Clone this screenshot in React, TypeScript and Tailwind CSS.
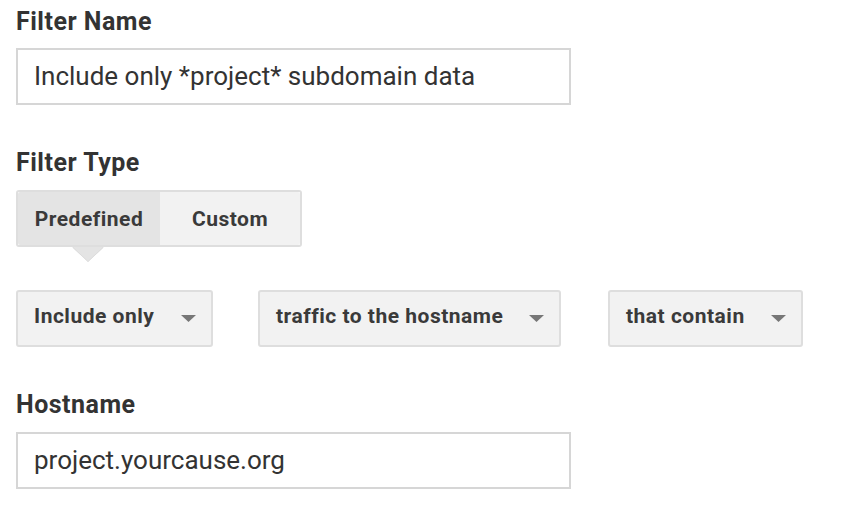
import { useState } from 'react';

const font = { fontFamily: 'Roboto, "Liberation Sans", sans-serif' };

function Label({ children, className = '' }: { children: React.ReactNode; className?: string }) {
  return (
    <div className={`h-[28px] text-[25px] leading-[28px] tracking-[0.5px] font-bold text-[#333] ${className}`}>
      {children}
    </div>
  );
}

function TextInput({ value, className = '' }: { value: string; className?: string }) {
  return (
    <div
      className={`w-[555px] h-[57px] border-2 border-[#d6d6d6] bg-white flex items-center px-[16px] text-[26px] text-[#333] ${className}`}
    >
      {value}
    </div>
  );
}

function Dropdown({ label, width }: { label: string; width: string }) {
  return (
    <button
      className={`${width} h-[57px] flex items-center justify-between pl-[16px] pr-[15px] rounded-[3px] border-2 border-[#dedede] bg-[#f2f2f2] text-[21px] tracking-[0.5px] font-bold text-[#3a3a3a]`}
    >
      <span className="-mt-[3px]">{label}</span>
      <svg width="15" height="7" viewBox="0 0 15 7" className="shrink-0">
        <path d="M0 0 H15 L7.5 7 Z" fill="#777" />
      </svg>
    </button>
  );
}

export default function App() {
  const [mode, setMode] = useState<'predefined' | 'custom'>('predefined');

  return (
    <div style={font} className="w-[846px] h-[516px] bg-white pl-[16px] pt-[8px]">
      <Label>Filter Name</Label>
      <TextInput value="Include only *project* subdomain data" className="mt-[12px]" />

      <Label className="mt-[44px]">Filter Type</Label>
      <div className="mt-[13px] relative flex w-[286px] h-[57px] rounded-[3px] border-2 border-[#dedede] text-[21px] tracking-[0.5px] font-bold text-[#3a3a3a]">
        <button
          onClick={() => setMode('predefined')}
          className={`w-[142px] h-full pt-[3px] rounded-l-[2px] ${mode === 'predefined' ? 'bg-[#e4e4e4]' : 'bg-[#f2f2f2]'}`}
        >
          Predefined
        </button>
        <button
          onClick={() => setMode('custom')}
          className={`flex-1 h-full pt-[3px] rounded-r-[2px] ${mode === 'custom' ? 'bg-[#e4e4e4]' : 'bg-[#f2f2f2]'}`}
        >
          Custom
        </button>
        {/* pointer under the active tab */}
        <svg
          width="32"
          height="16"
          viewBox="0 0 32 16"
          className={`absolute top-[55px] ${mode === 'predefined' ? 'left-[54px]' : 'left-[195px]'}`}
        >
          <path d="M0 0 L16 15 L32 0 Z" fill="#e4e4e4" />
          <path d="M1 0.5 L16 14.5 L31 0.5" fill="none" stroke="#dcdcdc" strokeWidth="1" />
        </svg>
      </div>

      <div className="mt-[43px] flex items-center">
        <Dropdown label="Include only" width="w-[197px]" />
        <div className="ml-[45px]">
          <Dropdown label="traffic to the hostname" width="w-[303px]" />
        </div>
        <div className="ml-[47px]">
          <Dropdown label="that contain" width="w-[195px]" />
        </div>
      </div>

      <Label className="mt-[44px]">Hostname</Label>
      <TextInput value="project.yourcause.org" className="mt-[13px]" />
    </div>
  );
}
